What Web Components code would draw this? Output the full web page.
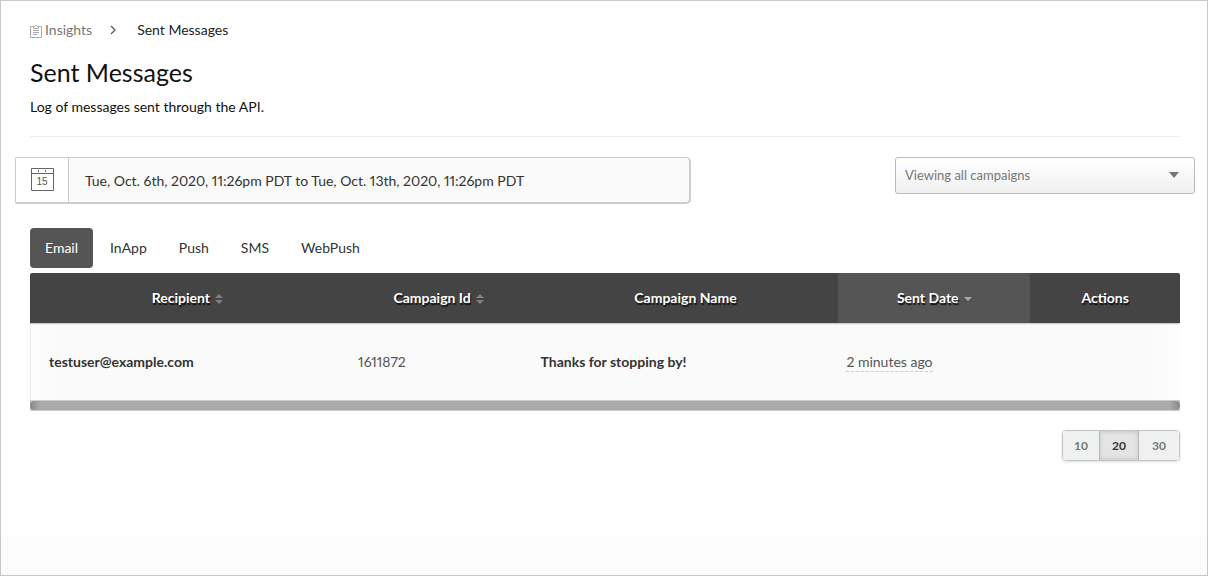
<!DOCTYPE html>
<html lang="en">
<head>
<meta charset="utf-8">
<title>Sent Messages</title>
<style>
  body {
    background: #fff;
    color: #222;
    font: 14px/20px Lato, "Liberation Sans", sans-serif;
    font-variant-numeric: proportional-nums;
    margin: 0;
  }
</style>
</head>
<body>
<message-page>
  <bread-crumb slot="header" parent="Insights">Sent Messages</bread-crumb>
  <page-title slot="header" heading="Sent Messages">Log of messages sent through the API.</page-title>
  <date-range slot="toolbar">Tue, Oct. 6th, 2020, 11:26pm PDT to Tue, Oct. 13th, 2020, 11:26pm PDT</date-range>
  <campaign-select slot="toolbar"></campaign-select>
  <tab-bar tabs="Email,InApp,Push,SMS,WebPush"></tab-bar>
  <message-table></message-table>
  <page-size sizes="10,20,30" current="20"></page-size>
</message-page>

<script>
const define = (name, html, setup) => {
  const template = document.createElement('template')
  template.innerHTML = html

  window.customElements.define(name, class extends HTMLElement {
    constructor () {
      super()

      this.attachShadow({mode: 'open'})
      this.shadowRoot.appendChild(template.content.cloneNode(true))
      if (setup) setup(this, this.shadowRoot)
    }
  })
}

define('message-page', `
  <style>
    :host {
      border: 1px solid #c8c8c8;
      box-sizing: border-box;
      display: flex;
      flex-direction: column;
      min-height: 100vh;
    }
    main {
      flex: 1;
      padding: 19px 12px 24px 14px;
    }
    header, section { margin: 0 15px; }
    header {
      border-bottom: 1px solid #eee;
      padding-bottom: 19px;
    }
    .toolbar {
      align-items: flex-start;
      display: flex;
      gap: 24px;
      justify-content: space-between;
      margin: 20px 0 24px;
    }
    footer {
      background: #fcfcfc;
      height: 39px;
    }
  </style>
  <main>
    <header><slot name="header"></slot></header>
    <div class="toolbar"><slot name="toolbar"></slot></div>
    <section><slot></slot></section>
  </main>
  <footer></footer>
`)

define('bread-crumb', `
  <style>
    :host { display: block; }
    nav {
      align-items: center;
      display: flex;
    }
    a {
      align-items: center;
      color: #777;
      display: flex;
      gap: 3px;
      text-decoration: none;
    }
    .clipboard { margin-top: 2px; }
    .chevron { margin: 0 20px 0 17px; }
  </style>
  <nav aria-label="Breadcrumb">
    <a href="#insights">
      <svg class="clipboard" width="12" height="14" viewBox="0 0 12 14" fill="none" stroke="#aaa">
        <path d="M3 2.500H.5v11h11v-11H9"/>
        <path d="M3.500 4.500v-2h1.200a1.400 1.400 0 0 1 2.600 0h1.200v2z"/>
        <path d="M3 6.500h6M3 8.500h6M3 10.500h4"/>
      </svg>
      <span></span>
    </a>
    <svg class="chevron" width="8" height="10" viewBox="0 0 8 10" fill="none" stroke="#555" stroke-width="1.200">
      <path d="M2 1l4 4-4 4"/>
    </svg>
    <slot></slot>
  </nav>
`, (el, root) => {
  root.querySelector('span').textContent = el.getAttribute('parent')
})

define('page-title', `
  <style>
    :host {
      color: #111;
      display: block;
    }
    h1 {
      font-size: 25px;
      font-weight: 400;
      line-height: 32px;
      margin: 16px 0 9px;
    }
    p { margin: 0; }
  </style>
  <h1></h1>
  <p><slot></slot></p>
`, (el, root) => {
  root.querySelector('h1').textContent = el.getAttribute('heading')
})

define('date-range', `
  <style>
    :host {
      display: block;
      flex: 0 1 676px;
    }
    button {
      align-items: stretch;
      background: #fafafa;
      border: 1px solid #ccc;
      border-bottom: 2px solid #ccc;
      border-radius: 2px 5px 5px 2px;
      border-right-width: 2px;
      box-sizing: border-box;
      color: #333;
      display: flex;
      font: inherit;
      font-variant-numeric: inherit;
      padding: 0;
      text-align: left;
      width: 100%;
    }
    .icon {
      background: #fff;
      border-right: 1px solid #ccc;
      display: flex;
      padding: 9px 14px 11px;
    }
    .text { padding: 13px 16px 11px; }
    text { font: 10px "Liberation Sans", sans-serif; }
  </style>
  <button type="button" aria-label="Date range">
    <span class="icon">
      <svg width="24" height="24" viewBox="0 0 24 24">
        <path d="M1.500 1.500h22v22h-22zM1.500 6.500h22" fill="none" stroke="#666"/>
        <path d="M8 3h1v2H8zM15 3h1v2h-1z" fill="#666"/>
        <text x="12" y="18" text-anchor="middle" fill="#555">15</text>
      </svg>
    </span>
    <span class="text"><slot></slot></span>
  </button>
`)

define('campaign-select', `
  <style>
    :host {
      display: block;
      flex: 0 0 300px;
      position: relative;
    }
    select {
      appearance: none;
      background: linear-gradient(#fff, #f0f0f0);
      border: 1px solid #bbb;
      border-radius: 3px;
      box-sizing: border-box;
      color: #777;
      display: block;
      font: inherit;
      font-size: 13px;
      height: 37px;
      padding: 0 36px 1px 9px;
      width: 100%;
    }
    svg {
      pointer-events: none;
      position: absolute;
      right: 16px;
      top: 15px;
    }
  </style>
  <select aria-label="Campaign">
    <option>Viewing all campaigns</option>
  </select>
  <svg width="10" height="6" viewBox="0 0 10 6"><path d="M0 0h10L5 6z" fill="#777"/></svg>
`)

define('tab-bar', `
  <style>
    :host { display: block; }
    div {
      display: flex;
      gap: 2px;
      margin-bottom: 5px;
    }
    button {
      background: none;
      border: 0;
      border-radius: 4px;
      color: #333;
      font: inherit;
      padding: 10px 15px;
    }
    button[aria-selected=true] {
      background: #555;
      color: #fff;
    }
  </style>
  <div role="tablist"></div>
`, (el, root) => {
  el.getAttribute('tabs').split(',').forEach((name, i) => {
    const button = document.createElement('button')
    button.type = 'button'
    button.setAttribute('role', 'tab')
    button.setAttribute('aria-selected', i === 0)
    button.textContent = name
    root.querySelector('div').appendChild(button)
  })
})

define('sort-icon', `
  <style>
    :host {
      display: inline-block;
      margin-left: 2px;
      vertical-align: -1px;
    }
    :host([dir=desc]) .up { display: none; }
    :host([dir=desc]) .down {
      fill: #aaa;
      transform: translateY(-3px);
    }
    svg {
      display: block;
      fill: #808080;
    }
  </style>
  <svg width="8" height="10" viewBox="0 0 8 10">
    <path class="up" d="M0 4l4-4 4 4z"/>
    <path class="down" d="M0 6h8l-4 4z"/>
  </svg>
`)

define('message-table', `
  <style>
    :host { display: block; }
    table {
      border-collapse: collapse;
      table-layout: fixed;
      width: 100%;
    }
    th {
      background: #444;
      color: #fff;
      height: 50px;
      padding: 0;
      text-shadow: 1px 2px 1px #111;
    }
    th:first-child { border-top-left-radius: 2px; }
    th:last-child { border-top-right-radius: 2px; }
    th.sorted { background: #555; }
    th button {
      background: none;
      border: 0;
      color: inherit;
      font: inherit;
      padding: 0;
      text-shadow: inherit;
    }
    .recipient { width: 27.400%; }
    .id { width: 16.300%; }
    .name { width: 26.600%; }
    .date { width: 16.700%; }
    td {
      color: #555;
      height: 77px;
      padding: 0 8px;
    }
    td:first-child { padding-left: 19px; }
    td:nth-child(2) { padding-left: 13px; }
    tbody tr {
      background:
        linear-gradient(#ccc 1px, #eee 1px, #eee 2px, transparent 2px),
        linear-gradient(90deg, #eee 1px, #fdfdfd 1px, #fafafa 30px, #fafafa calc(100% - 30px), #fdfdfd);
    }
    b { color: #333; }
    time {
      border-bottom: 1px dashed #ccc;
      padding-bottom: 1px;
    }
    .track {
      background: #ccc;
      padding: 1px 0;
    }
    .thumb {
      background: linear-gradient(90deg, #888, #aaa 10px, #aaa calc(100% - 10px), #888);
      border-radius: 4px;
      height: 9px;
    }
  </style>
  <table>
    <thead>
      <tr>
        <th class="recipient"><button type="button">Recipient <sort-icon></sort-icon></button></th>
        <th class="id"><button type="button">Campaign Id <sort-icon></sort-icon></button></th>
        <th class="name">Campaign Name</th>
        <th class="date sorted" aria-sort="descending"><button type="button">Sent Date <sort-icon dir="desc"></sort-icon></button></th>
        <th>Actions</th>
      </tr>
    </thead>
    <tbody>
      <tr>
        <td><b>testuser@example.com</b></td>
        <td>1611872</td>
        <td><b>Thanks for stopping by!</b></td>
        <td><time>2 minutes ago</time></td>
        <td></td>
      </tr>
    </tbody>
  </table>
  <div class="track"><div class="thumb"></div></div>
`)

define('page-size', `
  <style>
    :host {
      display: flex;
      justify-content: flex-end;
      margin-top: 19px;
    }
    div {
      border: 1px solid #c4c4c4;
      border-radius: 4px;
      box-shadow: 0 1px 3px #ddd;
      display: flex;
      overflow: hidden;
    }
    button {
      background: #eff1f1;
      border: 0;
      color: #777;
      font: bold 12px/29px Lato, "Liberation Sans", sans-serif;
      padding: 0;
      width: 40px;
    }
    button:first-child { width: 36px; }
    button[aria-pressed=true] {
      background: #e4e4e4;
      box-shadow: inset 0 0 5px #bbb, inset 1px 0 #b4b4b4, inset -1px 0 #b4b4b4;
      color: #333;
    }
  </style>
  <div role="group" aria-label="Rows per page"></div>
`, (el, root) => {
  el.getAttribute('sizes').split(',').forEach(size => {
    const button = document.createElement('button')
    button.type = 'button'
    button.setAttribute('aria-pressed', size === el.getAttribute('current'))
    button.textContent = size
    root.querySelector('div').appendChild(button)
  })
})
</script>
</body>
</html>
